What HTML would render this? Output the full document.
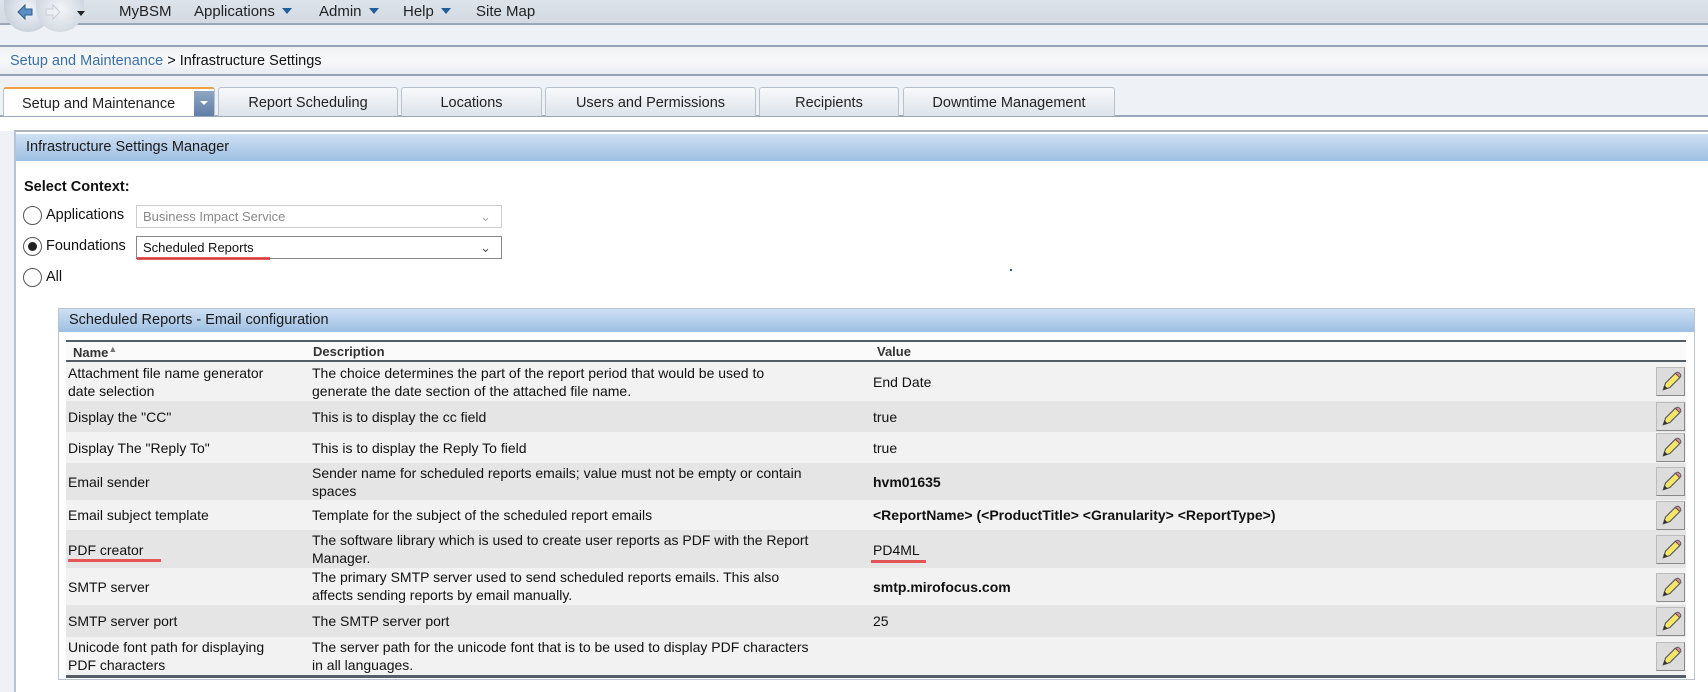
<!DOCTYPE html>
<html><head><meta charset="utf-8"><style>
*{box-sizing:border-box;margin:0;padding:0}
body{width:1708px;height:692px;overflow:hidden;background:#eef2f6;font-family:"Liberation Sans",Arial,sans-serif;font-size:14px;color:#111;position:relative}
.a{position:absolute}
.nav{left:0;top:0;width:1708px;height:25px;background:linear-gradient(#dde3ea,#d3dae3);border-bottom:2px solid #9aa8ba}
.nav span{position:absolute;top:3px;font-size:15px;color:#222}
.tri{display:inline-block;width:0;height:0;border-left:5px solid transparent;border-right:5px solid transparent;border-top:6px solid #1f5d9b;margin-left:7px;vertical-align:2px}
.bc{left:0;top:45px;width:1708px;height:31px;border-top:2px solid #95a3b5;border-bottom:2px solid #95a3b5;background:linear-gradient(#f0f1f3,#f8f9fa 50%,#e8ecf2)}
.tab{top:87px;height:29px;border:1px solid #b9c2cc;border-bottom:none;border-radius:3px 3px 0 0;background:linear-gradient(#f8f9fb,#dde3ea);text-align:center;font-size:14.5px;line-height:30px;color:#222}
.panel{left:14px;top:130px;width:1700px;height:562px;background:#fff;border-left:2px solid #b8c4d2;border-top:2px solid #b0b6bd}
.hdr{background:linear-gradient(#cfe0f3,#9dbfe3);color:#1a1a1a;font-size:14.5px}
.radio{width:19px;height:19px;border:1px solid #555;border-radius:50%;background:#fff}
.sel{height:23px;border:1px solid #aaa;background:#fff;font-size:13px;padding-left:6px;line-height:21px}
.row{left:66px;width:1620px}
.c{position:absolute;line-height:18px}
.pen{position:absolute;left:1590px;width:29px;height:29px;background:#dcdcdc;border:1px solid #bbb;border-right-color:#888;border-bottom-color:#888}
</style></head><body>
<div class="a nav">
 <div class="a" style="left:4px;top:0;width:48px;height:32px;border-radius:0 0 24px 24px;background:radial-gradient(circle at 50% 30%,#f4f6f9,#b7c3d1)"></div>
 <div class="a" style="left:36px;top:0;width:48px;height:32px;border-radius:0 0 24px 24px;background:radial-gradient(circle at 50% 30%,#f4f6f9,#c4ced9)"></div>
 <svg class="a" style="left:16px;top:3px" width="18" height="18"><path d="M2 9 L9 2 L9 6 L16 6 L16 12 L9 12 L9 16 Z" fill="#5b8fc4" stroke="#2c5e90"/></svg>
 <svg class="a" style="left:44px;top:3px" width="18" height="18"><path d="M16 9 L9 2 L9 6 L2 6 L2 12 L9 12 L9 16 Z" fill="#eef0f3" stroke="#c8cdd4"/></svg>
 <div class="a" style="left:77px;top:11px;border-left:4px solid transparent;border-right:4px solid transparent;border-top:5px solid #222"></div>
 <span style="left:119px">MyBSM</span>
 <span style="left:194px">Applications<i class="tri"></i></span>
 <span style="left:319px">Admin<i class="tri"></i></span>
 <span style="left:403px">Help<i class="tri"></i></span>
 <span style="left:476px">Site Map</span>
</div>
<div class="a bc"><span class="a" style="left:10px;top:6px;font-size:14.5px"><span style="color:#3a6ea5">Setup and Maintenance</span> &gt; Infrastructure Settings</span></div>
<div class="a" style="left:0;top:115px;width:1708px;height:2px;background:#9aa8ba"></div>
<div class="a" style="left:0;top:117px;width:1708px;height:14px;background:#fff"></div>
<div class="a tab" style="left:3px;width:212px;background:#fff;border-top:2px solid #f0a040;text-align:left;padding-left:18px">Setup and Maintenance<div class="a" style="left:190px;top:2px;width:20px;height:25px;background:linear-gradient(#8fa6c2,#5f7fa6)"><div class="a" style="left:6px;top:10px;border-left:4px solid transparent;border-right:4px solid transparent;border-top:4px solid #fff"></div></div></div>
<div class="a tab" style="left:218px;width:180px">Report Scheduling</div>
<div class="a tab" style="left:401px;width:141px">Locations</div>
<div class="a tab" style="left:545px;width:211px">Users and Permissions</div>
<div class="a tab" style="left:759px;width:140px">Recipients</div>
<div class="a tab" style="left:903px;width:212px">Downtime Management</div>
<div class="a panel">
 <div class="a hdr" style="left:0;top:2px;width:1700px;height:27px;line-height:27px;padding-left:10px">Infrastructure Settings Manager</div>
</div>
<div class="a" style="left:24px;top:179px;font-weight:bold;font-size:14.5px">Select Context:</div>
<div class="a radio" style="left:23px;top:206px"></div>
<div class="a" style="left:46px;top:207px;font-size:14.5px">Applications</div>
<div class="a sel" style="left:136px;top:205px;width:366px;color:#888;border-color:#ccc">Business Impact Service<span class="a" style="right:10px;top:0;color:#aaa">&#8964;</span></div>
<div class="a radio" style="left:23px;top:237px"><div class="a" style="left:4px;top:4px;width:9px;height:9px;border-radius:50%;background:#222"></div></div>
<div class="a" style="left:46px;top:238px;font-size:14.5px">Foundations</div>
<div class="a sel" style="left:136px;top:236px;width:366px;border-color:#888">Scheduled Reports<span class="a" style="right:10px;top:0;color:#555">&#8964;</span></div>
<div class="a" style="left:137px;top:257px;width:133px;height:3px;background:#e53030;opacity:.8"></div>
<div class="a radio" style="left:23px;top:268px"></div>
<div class="a" style="left:46px;top:269px;font-size:14.5px">All</div>
<div class="a" style="left:1010px;top:269px;width:2px;height:2px;background:#3355aa"></div>
<div class="a" style="left:58px;top:308px;width:1637px;height:372px;border:1px solid #b8c4d2;background:#fff"></div>
<div class="a hdr" style="left:59px;top:309px;width:1635px;height:23px;line-height:23px;padding-left:10px">Scheduled Reports - Email configuration</div>
<div class="a" style="left:66px;top:340px;width:1620px;height:2px;background:#555d66"></div>
<div class="a" style="left:66px;top:342px;width:1620px;height:18px;background:#fafafa;font-weight:bold;font-size:13px;color:#333">
 <span class="a" style="left:7px;top:2px">Name<span style="font-size:9px;color:#777;vertical-align:5px">&#9650;</span></span>
 <span class="a" style="left:247px;top:2px">Description</span>
 <span class="a" style="left:811px;top:2px">Value</span>
</div>
<div class="a" style="left:66px;top:360px;width:1620px;height:2px;background:#555d66"></div>

<div class="a row" style="top:362px;height:39px;background:#f2f2f2"><div class="c" style="left:2px;top:2px">Attachment file name generator<br>date selection</div><div class="c" style="left:246px;top:2px">The choice determines the part of the report period that would be used to<br>generate the date section of the attached file name.</div><div class="c" style="left:807px;top:11px">End Date</div><div class="pen" style="top:5px"></div></div>
<div class="a row" style="top:401px;height:31px;background:#e5e5e5"><div class="c" style="left:2px;top:7px">Display the "CC"</div><div class="c" style="left:246px;top:7px">This is to display the cc field</div><div class="c" style="left:807px;top:7px">true</div><div class="pen" style="top:1px"></div></div>
<div class="a row" style="top:432px;height:31px;background:#f2f2f2"><div class="c" style="left:2px;top:7px">Display The "Reply To"</div><div class="c" style="left:246px;top:7px">This is to display the Reply To field</div><div class="c" style="left:807px;top:7px">true</div><div class="pen" style="top:1px"></div></div>
<div class="a row" style="top:463px;height:37px;background:#e5e5e5"><div class="c" style="left:2px;top:10px">Email sender</div><div class="c" style="left:246px;top:1px">Sender name for scheduled reports emails; value must not be empty or contain<br>spaces</div><div class="c" style="left:807px;top:10px;font-weight:bold">hvm01635</div><div class="pen" style="top:4px"></div></div>
<div class="a row" style="top:500px;height:30px;background:#f2f2f2"><div class="c" style="left:2px;top:6px">Email subject template</div><div class="c" style="left:246px;top:6px">Template for the subject of the scheduled report emails</div><div class="c" style="left:807px;top:6px;font-weight:bold">&lt;ReportName&gt; (&lt;ProductTitle&gt; &lt;Granularity&gt; &lt;ReportType&gt;)</div><div class="pen" style="top:1px"></div></div>
<div class="a row" style="top:530px;height:38px;background:#e5e5e5"><div class="c" style="left:2px;top:11px">PDF creator</div><div class="a" style="left:2px;top:29px;width:93px;height:3px;background:#e53030;opacity:.8"></div><div class="c" style="left:246px;top:1px">The software library which is used to create user reports as PDF with the Report<br>Manager.</div><div class="c" style="left:807px;top:11px">PD4ML</div><div class="a" style="left:805px;top:30px;width:55px;height:3px;background:#e53030;opacity:.8"></div><div class="pen" style="top:5px"></div></div>
<div class="a row" style="top:568px;height:37px;background:#f2f2f2"><div class="c" style="left:2px;top:10px">SMTP server</div><div class="c" style="left:246px;top:0px">The primary SMTP server used to send scheduled reports emails. This also<br>affects sending reports by email manually.</div><div class="c" style="left:807px;top:10px;font-weight:bold">smtp.mirofocus.com</div><div class="pen" style="top:5px"></div></div>
<div class="a row" style="top:605px;height:32px;background:#e5e5e5"><div class="c" style="left:2px;top:7px">SMTP server port</div><div class="c" style="left:246px;top:7px">The SMTP server port</div><div class="c" style="left:807px;top:7px">25</div><div class="pen" style="top:2px"></div></div>
<div class="a row" style="top:637px;height:38px;background:#f2f2f2"><div class="c" style="left:2px;top:1px">Unicode font path for displaying<br>PDF characters</div><div class="c" style="left:246px;top:1px">The server path for the unicode font that is to be used to display PDF characters<br>in all languages.</div><div class="pen" style="top:5px"></div></div>
<div class="a" style="left:66px;top:675px;width:1620px;height:3px;background:#555d66"></div>

<svg width="0" height="0" style="position:absolute"><defs><symbol id="p" viewBox="0 0 20 20"><path d="M3 17 L5 11 L14 2 L18 6 L9 15 Z" fill="#f5e66a" stroke="#555" stroke-width="1"/><path d="M14 2 L18 6 L19 5 Q19 2 16 1 Z" fill="#e58a9a" stroke="#555" stroke-width=".8"/><path d="M3 17 L4 13 L7 16 Z" fill="#333"/></symbol></defs></svg>
<script>document.querySelectorAll('.pen').forEach(function(e){e.innerHTML='<svg width="22" height="22" style="position:absolute;left:3px;top:3px"><use href="#p"/></svg>'})</script>
</body></html>
